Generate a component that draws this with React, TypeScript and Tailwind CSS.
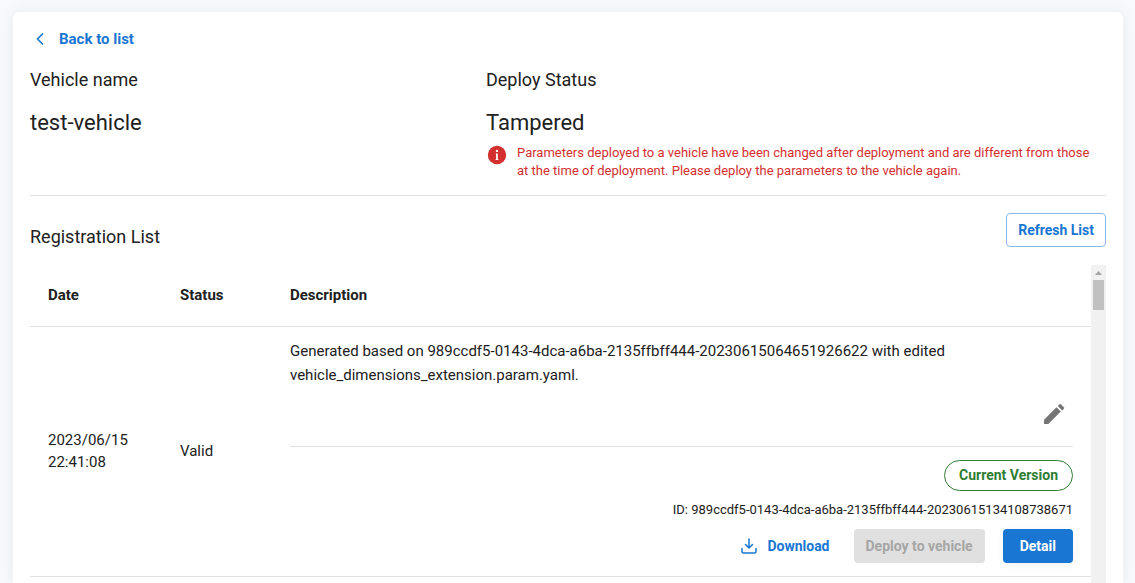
import React from 'react';
import { ChevronLeft } from 'lucide-react';

interface Registration {
  id: string;
  date: string;
  time: string;
  status: string;
  description: string;
  current: boolean;
}

const registrations: Registration[] = [
  {
    id: '989ccdf5-0143-4dca-a6ba-2135ffbff444-20230615134108738671',
    date: '2023/06/15',
    time: '22:41:08',
    status: 'Valid',
    description:
      'Generated based on 989ccdf5-0143-4dca-a6ba-2135ffbff444-20230615064651926622 with edited vehicle_dimensions_extension.param.yaml.',
    current: true,
  },
];

const InfoIcon: React.FC = () => (
  <svg className="size-[22px] shrink-0 fill-[#d32f2f]" viewBox="0 0 24 24" aria-hidden="true">
    <circle cx="12" cy="12" r="10" />
    <circle cx="12" cy="7.5" r="1.3" fill="#fff" />
    <path d="M10.8 10.300h2.100v6.200h0.700v1h-3.300v-1h0.700v-5.200h-0.400z" fill="#fff" />
  </svg>
);

const PencilIcon: React.FC = () => (
  <svg className="size-6" viewBox="0 0 24 24" fill="currentColor" aria-hidden="true">
    <path d="M2 21.400v-3.200q0-0.400 0.300-0.700L14.500 5.300l4.300 4.300L6.600 21.700q-0.300 0.300-0.700 0.300H2.600q-0.600 0-0.600-0.600z" />
    <path d="M15.800 4l1.500-1.500q0.900-0.800 1.800 0l2.700 2.700q0.800 0.900 0 1.800L20.200 8.400z" />
  </svg>
);

const DownloadIcon: React.FC = () => (
  <svg
    className="size-[18px]"
    viewBox="0 0 18 18"
    fill="none"
    stroke="currentColor"
    strokeWidth="1.5"
    strokeLinecap="round"
    strokeLinejoin="round"
    aria-hidden="true"
  >
    <path d="M9 2v9M5.5 7.5L9 11l3.500-3.500M2 11.500v3a1.500 1.500 0 0 0 1.500 1.500h11a1.500 1.500 0 0 0 1.500-1.500v-3" />
  </svg>
);

const RegistrationRow: React.FC<{ item: Registration }> = ({ item }) => (
  <tr className="border-b border-[#e0e0e0]">
    <td className="px-[18px] leading-[22px]">
      {item.date}
      <br />
      {item.time}
    </td>
    <td className="px-[18px]">{item.status}</td>
    <td className="px-[18px] pt-3 pb-[13px]">
      <p className="leading-6">{item.description}</p>
      <div className="flex justify-end border-b border-[#e0e0e0] pt-2 pb-[13px]">
        <button aria-label="Edit description" className="rounded-full p-[7px] text-[#757575] hover:bg-black/5">
          <PencilIcon />
        </button>
      </div>
      <div className="flex flex-col items-end pt-[13px]">
        {item.current && (
          <span className="rounded-full border border-[#2e7d32] px-[14px] text-sm leading-[29px] font-bold text-[#2e7d32]">
            Current Version
          </span>
        )}
        <p className="mt-[9px] text-[13px] leading-5">ID: {item.id}</p>
        <div className="mt-[9px] flex items-center text-sm font-bold">
          <button className="mr-6 flex h-[34px] items-center gap-[9px] text-[#1976d2]">
            <DownloadIcon />
            Download
          </button>
          <button disabled className="mr-[18px] h-[34px] rounded bg-[#e0e0e0] px-3 text-[#a6a6a6]">
            Deploy to vehicle
          </button>
          <button className="h-[34px] rounded bg-[#1976d2] px-[17px] text-white shadow-[0_2px_10px_rgba(0,0,0,0.05)]">
            Detail
          </button>
        </div>
      </div>
    </td>
  </tr>
);

const App: React.FC = () => {
  return (
    <div className="flex min-h-screen flex-col bg-[#f7f9fc] pt-3 pr-3 pl-[13px] font-['Roboto',sans-serif] text-[15px] text-[#212121]">
      <main className="flex flex-1 flex-col rounded-t-md bg-white px-[17px] pt-4 shadow-[0_0_14px_rgba(40,50,70,0.07)]">
        <a href="#list" className="flex h-[22px] items-center gap-[9px] self-start font-bold text-[#1976d2]">
          <ChevronLeft size={20} />
          Back to list
        </a>

        <section className="grid grid-cols-[456px_1fr] border-b border-[#e0e0e0] pt-[17px] pb-[15px]">
          <div>
            <h2 className="text-lg leading-[26px]">Vehicle name</h2>
            <p className="mt-[14px] text-[22px] leading-8">test-vehicle</p>
          </div>
          <div>
            <h2 className="text-lg leading-[26px]">Deploy Status</h2>
            <p className="mt-[14px] text-[22px] leading-8">Tampered</p>
            <div className="mt-[5px] flex gap-[9px] pr-2 text-[13px] leading-[18px] text-[#d32f2f]" role="alert">
              <InfoIcon />
              <p>
                Parameters deployed to a vehicle have been changed after deployment and are different from those at the
                time of deployment. Please deploy the parameters to the vehicle again.
              </p>
            </div>
          </div>
        </section>

        <div className="flex items-start justify-between pt-[17px]">
          <h2 className="pt-[11px] text-lg leading-[26px]">Registration List</h2>
          <button className="h-[34px] rounded border border-[#8cbae8] px-[11px] text-sm font-bold text-[#1976d2]">
            Refresh List
          </button>
        </div>

        <div className="mt-[15px] flex flex-1">
          <div className="flex-1">
            <table className="w-full table-fixed border-collapse text-left">
              <thead>
                <tr className="h-[61px] border-b border-[#e0e0e0]">
                  <th className="w-[132px] px-[18px] font-bold">Date</th>
                  <th className="w-[110px] px-[18px] font-bold">Status</th>
                  <th className="px-[18px] font-bold">Description</th>
                </tr>
              </thead>
              <tbody>
                {registrations.map((item) => (
                  <RegistrationRow key={item.id} item={item} />
                ))}
              </tbody>
            </table>
          </div>
          <div className="flex w-[15px] flex-col items-center bg-[#f1f1f1]" aria-hidden="true">
            <div className="flex h-[15px] items-center">
              <svg className="h-1 w-[7px] fill-[#a3a3a3]" viewBox="0 0 7 4">
                <path d="M0 4h7L3.500 0z" />
              </svg>
            </div>
            <div className="h-[30px] w-[11px] bg-[#c1c1c1]" />
          </div>
        </div>
      </main>
    </div>
  );
};

export default App;
